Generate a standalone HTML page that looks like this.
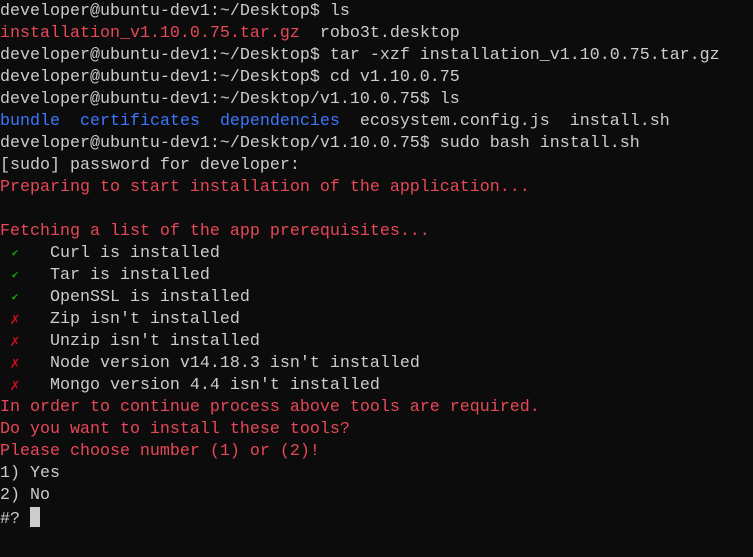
<!DOCTYPE html>
<html><head><meta charset="utf-8"><style>
html,body{margin:0;padding:0;background:#0c0c0c;width:753px;height:557px;overflow:hidden}
pre{margin:0;padding:1px 0 0 0;font-family:"Liberation Mono","DejaVu Sans Mono",monospace;font-size:16.67px;line-height:22px;color:#cccccc;white-space:pre}
.r{color:#e74856}.b{color:#3b78ff}
.g,.x{display:inline-block;width:10px;height:22px;line-height:22px;vertical-align:top;text-align:center;overflow:hidden}
.g{color:#13a10e;font-size:11px;font-weight:bold}
.x{color:#c50f1f;font-size:16px}
.cur{display:inline-block;width:10px;height:20px;background:#cccccc;vertical-align:-4px}
</style></head><body><pre>developer@ubuntu-dev1:~/Desktop$ ls
<span class="r">installation_v1.10.0.75.tar.gz</span>  robo3t.desktop
developer@ubuntu-dev1:~/Desktop$ tar -xzf installation_v1.10.0.75.tar.gz
developer@ubuntu-dev1:~/Desktop$ cd v1.10.0.75
developer@ubuntu-dev1:~/Desktop/v1.10.0.75$ ls
<span class="b">bundle</span>  <span class="b">certificates</span>  <span class="b">dependencies</span>  ecosystem.config.js  install.sh
developer@ubuntu-dev1:~/Desktop/v1.10.0.75$ sudo bash install.sh
[sudo] password for developer:
<span class="r">Preparing to start installation of the application...</span>

<span class="r">Fetching a list of the app prerequisites...</span>
 <span class="g">✔</span>   Curl is installed
 <span class="g">✔</span>   Tar is installed
 <span class="g">✔</span>   OpenSSL is installed
 <span class="x">✗</span>   Zip isn't installed
 <span class="x">✗</span>   Unzip isn't installed
 <span class="x">✗</span>   Node version v14.18.3 isn't installed
 <span class="x">✗</span>   Mongo version 4.4 isn't installed
<span class="r">In order to continue process above tools are required.</span>
<span class="r">Do you want to install these tools?</span>
<span class="r">Please choose number (1) or (2)!</span>
1) Yes
2) No
#? <span class="cur"></span></pre></body></html>
